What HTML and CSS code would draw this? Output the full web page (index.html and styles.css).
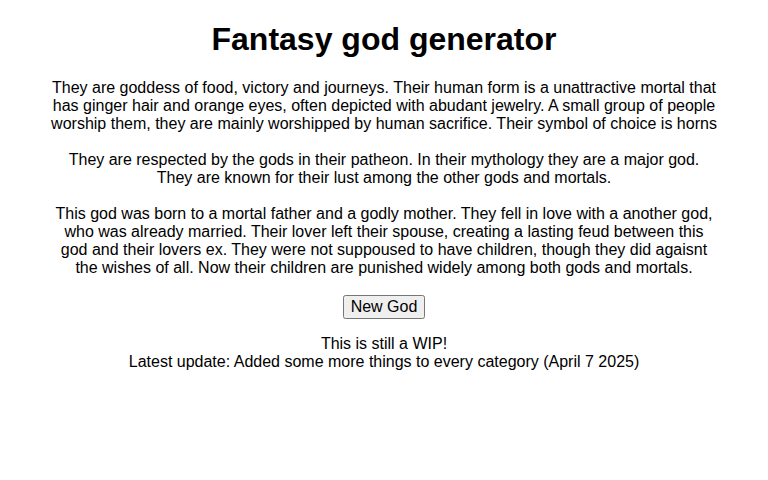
FILE: index.html
```html
<!DOCTYPE html>
<html lang="en">
<head>
    <meta charset="UTF-8">
    <meta name="viewport" content="width=device-width, initial-scale=1.0">
    <title>Fantasy god generator</title>
    <link rel="stylesheet" href="styles.css">
</head>
<body>
    <h1 class="title">Fantasy god generator</h1>
    <div class="god-text">
        <p>They are goddess of food, victory and journeys. Their human form is a unattractive mortal that has ginger hair and orange eyes, often depicted with abudant jewelry. A small group of people worship them, they are mainly worshipped by human sacrifice. Their symbol of choice is horns</p>
        <p>They are respected by the gods in their patheon. In their mythology they are a major god. They are known for their lust among the other gods and mortals.</p>
        <p>This god was born to a mortal father and a godly mother. They fell in love with a another god, who was already married. Their lover left their spouse, creating a lasting feud between this god and their lovers ex. They were not suppoused to have children, though they did agaisnt the wishes of all. Now their children are punished widely among both gods and mortals.</p>
    </div>
    <div class="controls"><button class="new-god">New God</button></div>
    <p class="notes">This is still a WIP!<br>Latest update: Added some more things to every category (April 7 2025)</p>
</body>
</html>
```

FILE: styles.css
```css
body {
    font-family: 'Liberation Sans', Arial, sans-serif;
    font-size: 16px;
    line-height: 18px;
    color: #000;
    background: #fff;
    text-align: center;
    margin: 0 8px;
}

.title {
    font-size: 32px;
    line-height: 37px;
    margin: 21px 0;
}

.god-text {
    max-width: 670px;
    margin: 0 auto;
}

.god-text p {
    margin: 18px 0;
}

.controls {
    margin: 18px 0 16px;
}

.new-god {
    font-family: 'Liberation Sans', Arial, sans-serif;
    font-size: 16px;
    line-height: 18px;
    padding: 1px 6px;
}

.notes {
    margin: 16px 0;
}
```
